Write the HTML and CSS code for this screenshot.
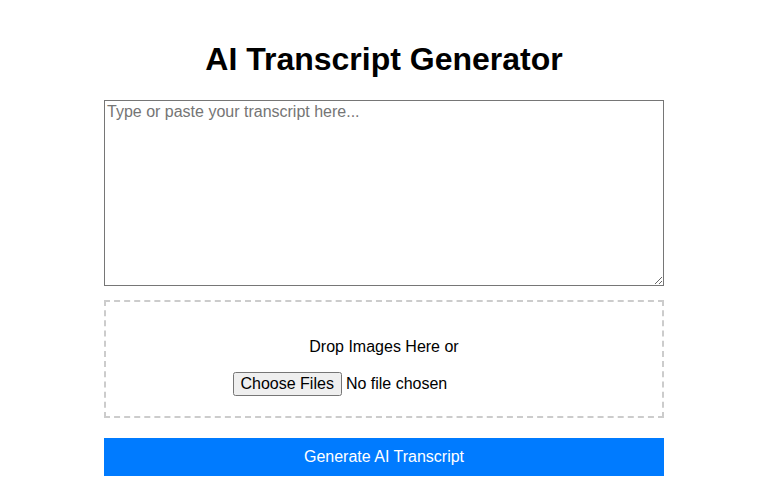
FILE: index.html
```html
<!DOCTYPE html>
<html lang="en">
<head>
<meta charset="utf-8">
<title>AI Transcript Generator</title>
<link rel="stylesheet" href="styles.css">
</head>
<body>
<div class="container">
  <h1 class="title">AI Transcript Generator</h1>
  <textarea class="transcript" placeholder="Type or paste your transcript here..."></textarea>
  <div class="dropzone">
    <p class="drop-text">Drop Images Here or</p>
    <input class="file-input" type="file" multiple accept="image/*">
  </div>
  <button class="generate" type="button">Generate AI Transcript</button>
</div>
</body>
</html>
```
FILE: styles.css
```css
html, body {
  margin: 0;
  padding: 0;
  background: #ffffff;
  font-family: "Liberation Sans", Arial, sans-serif;
  color: #000000;
}
.container {
  width: 560px;
  margin: 0 auto;
  padding: 20px 0;
}
.title {
  font-size: 32px;
  font-weight: bold;
  text-align: center;
  margin: 21.44px 0;
}
.transcript {
  display: block;
  box-sizing: border-box;
  width: 560px;
  height: 186px;
  margin: 0 0 14px 0;
  padding: 2px;
  border: 1px solid #767676;
  font-family: "Liberation Sans", Arial, sans-serif;
  font-size: 16px;
  resize: vertical;
}
.transcript::placeholder {
  color: #757575;
}
.dropzone {
  box-sizing: border-box;
  width: 560px;
  height: 118px;
  border: 2px dashed #cccccc;
  padding: 20px;
  text-align: center;
}
.drop-text {
  margin: 16px 0;
  font-size: 16px;
  line-height: 18px;
}
.file-input {
  font-family: "Liberation Sans", Arial, sans-serif;
  font-size: 16px;
}
.generate {
  display: block;
  width: 560px;
  height: 38px;
  margin-top: 20px;
  border: none;
  border-radius: 0;
  background: #007bff;
  color: #ffffff;
  font-family: "Liberation Sans", Arial, sans-serif;
  font-size: 16px;
  padding: 10px;
}
```
